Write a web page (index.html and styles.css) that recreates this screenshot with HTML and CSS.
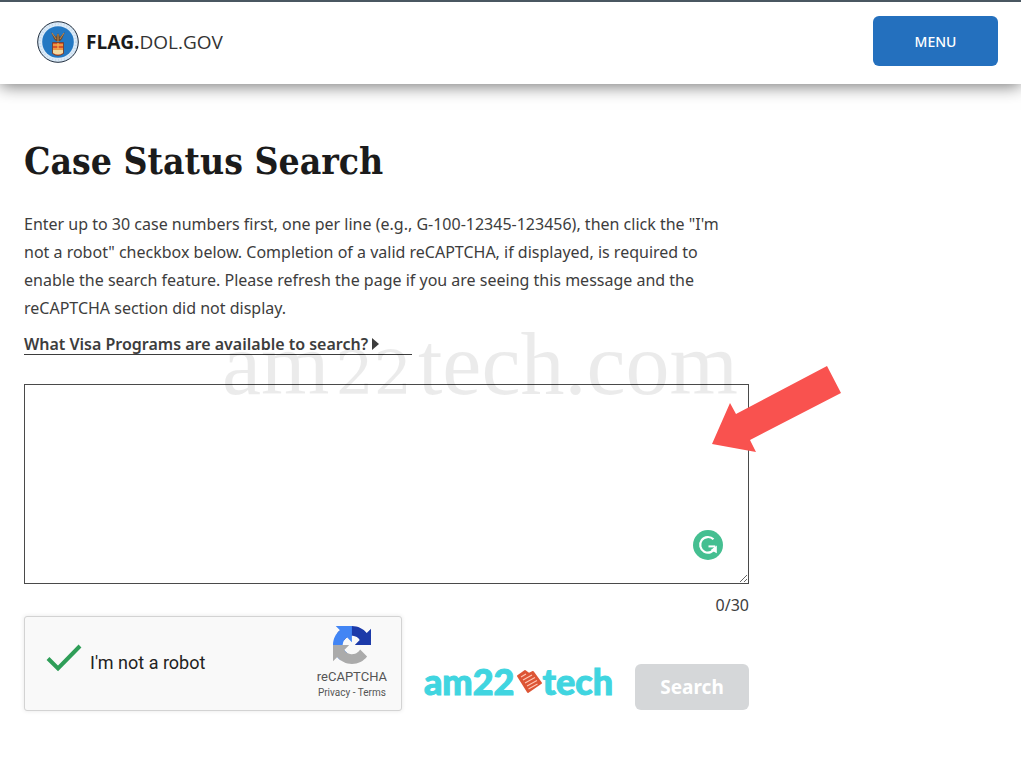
FILE: index.html
```
<!DOCTYPE html>
<html lang="en">
<head>
  <meta charset="UTF-8">
  <meta name="viewport" content="width=device-width, initial-scale=1.0">
  <title>Case Status Search</title>
  <link rel="stylesheet" href="styles.css">
</head>
<body>
  <header class="header">
    <a class="brand" href="#">
      <svg class="seal" viewBox="0 0 42 42" aria-hidden="true">
        <circle cx="21" cy="21" r="20.3" fill="#dcebf8" stroke="#1d2b3c" stroke-width="1"/>
        <circle cx="21" cy="21" r="18" fill="none" stroke="#c4d9ec" stroke-width="2" stroke-dasharray="1 2"/>
        <circle cx="21" cy="21" r="15.8" fill="#2378c3"/>
        <path d="M14 11l3 7 2 2h4l2-2 3-7-3 3-2 2-2-4-2 4-2-2z" fill="#6b4a2f"/>
        <path d="M15 12l4 6M27 12l-4 6M21 13v8" stroke="#c08a4c" stroke-width="1" fill="none"/>
        <path d="M15.500 21.500h11v11q-5.500 4-11 0z" fill="#d9532c" stroke="#6b3a1f" stroke-width=".7"/>
        <path d="M16 29h10v3q-5 3-10 0z" fill="#f0d9a0"/>
        <path d="M16 24h10M16 28h10M21 22v6" stroke="#f3b04c" stroke-width="1.300"/>
      </svg>
      <span><b>FLAG.</b>DOL.GOV</span>
    </a>
    <button class="menu-button" type="button">MENU</button>
  </header>

  <main class="content">
    <h1>Case Status Search</h1>
    <p class="intro">
      Enter up to 30 case numbers first, one per line (e.g., G-100-12345-123456), then click the "I'm<br>
      not a robot" checkbox below. Completion of a valid reCAPTCHA, if displayed, is required to<br>
      enable the search feature. Please refresh the page if you are seeing this message and the<br>
      reCAPTCHA section did not display.
    </p>
    <a class="programs" href="#">What Visa Programs are available to search? <span class="caret"></span></a>

    <form>
      <div class="case-box">
        <textarea class="case-input" aria-label="Case numbers"></textarea>
        <span class="watermark">am<span class="oldstyle">22</span>tech.com</span>
        <svg class="arrow" viewBox="0 0 130 87" aria-hidden="true">
          <path d="M0 78L18 37l6 11L115 0l14 27-91 47 6 12z" fill="#f9524f"/>
        </svg>
        <svg class="grammar" viewBox="0 0 30 30" aria-hidden="true">
          <circle cx="15" cy="15" r="15" fill="#45bf91"/>
          <path d="M20.500 9.300A7.800 7.800 0 1 0 22.300 17.500" fill="none" stroke="#fff" stroke-width="2.200"/>
          <path d="M15.500 16.400h6.800" stroke="#fff" stroke-width="2"/>
          <path d="M23.800 15.400v7.800l-6-3.200z" fill="#fff"/>
        </svg>
      </div>
      <div class="count">0/30</div>

      <div class="actions">
        <div class="captcha">
          <label class="robot">
            <input type="checkbox" checked>
            <svg class="tick" viewBox="0 0 36 28" aria-hidden="true">
              <path d="M2 14.500l10 10L34 2" fill="none" stroke="#2f9e58" stroke-width="4"/>
            </svg>
            I'm not a robot
          </label>
          <div class="captcha-info">
            <svg class="captcha-logo" viewBox="0 0 64 64" aria-hidden="true">
              <path fill="#1c3aa9" d="M64 31.955l-.033-1.370V4.687l-7.160 7.160C50.948 4.674 42.033.093 32.050.093c-10.400 0-19.622 4.960-25.458 12.640l11.736 11.860a15.550 15.550 0 0 1 4.754-5.334c2.050-1.600 4.952-2.906 8.968-2.906.485 0 .860.057 1.135.163 4.976.393 9.288 3.140 11.828 7.124l-8.307 8.307L64 31.953"/>
              <path fill="#4285f4" d="M31.862.094l-1.370.033H4.594l7.160 7.160C4.580 13.147 0 22.060 0 32.046c0 10.400 4.960 19.622 12.640 25.458L24.500 45.768a15.550 15.550 0 0 1-5.334-4.754c-1.600-2.050-2.906-4.952-2.906-8.968 0-.485.057-.860.163-1.135.393-4.976 3.140-9.288 7.124-11.828l8.307 8.307L31.860.095"/>
              <path fill="#ababab" d="M.001 32.045l.033 1.370v25.898l7.160-7.160c5.860 7.173 14.774 11.754 24.760 11.754 10.400 0 19.622-4.960 25.458-12.640l-11.736-11.860a15.550 15.550 0 0 1-4.754 5.334c-2.050 1.600-4.952 2.906-8.968 2.906-.485 0-.860-.057-1.135-.163-4.976-.393-9.288-3.140-11.828-7.124l8.307-8.307c-10.522.040-22.400.066-27.295-.005"/>
            </svg>
            <span class="captcha-name">reCAPTCHA</span>
            <span class="captcha-links"><a href="#">Privacy</a> - <a href="#">Terms</a></span>
          </div>
        </div>

        <div class="tech-logo">
          <span>am22</span>
          <svg viewBox="0 0 26 26" aria-hidden="true">
            <path d="M2 8L9 3l4 3 4-2 8 11L12 24z" fill="#dd5535" stroke="#dd5535" stroke-width="2" stroke-linejoin="round"/>
            <path d="M5 9l5-3M7 12l9-5M9 15l10-5.500M11 18l10-5.500M12.500 21l9-5" stroke="#ffc7b5" stroke-width="1.100"/>
          </svg>
          <span>tech</span>
        </div>

        <button class="search-button" type="submit" disabled>Search</button>
      </div>
    </form>
  </main>
</body>
</html>
```
FILE: styles.css
```
* {
  box-sizing: border-box;
}

body {
  margin: 0;
  background-color: #fff;
  color: #3d3d3d;
  font-family: "Noto Sans", "Open Sans", sans-serif;
  font-size: 16px;
}

a {
  color: inherit;
  text-decoration: none;
}

.header {
  display: flex;
  justify-content: space-between;
  align-items: center;
  height: 84px;
  padding: 0 23px 2px 37px;
  border-top: 2px solid #4a5761;
  box-shadow: 0 2px 16px rgba(0, 0, 0, 0.55);
}

.brand {
  display: flex;
  align-items: center;
  gap: 7px;
  color: #333;
  font-family: "Open Sans", sans-serif;
  font-size: 19px;
}

.brand b {
  color: #1b1b1b;
  font-weight: 700;
}

.seal {
  width: 42px;
  height: 42px;
}

.menu-button {
  width: 125px;
  height: 50px;
  margin-bottom: 2px;
  border: none;
  border-radius: 6px;
  background-color: #2470be;
  color: #fff;
  font-family: inherit;
  font-size: 14px;
  font-weight: 500;
  cursor: pointer;
}

.content {
  max-width: 773px;
  padding: 52px 24px;
}

h1 {
  margin: 0 0 24px;
  color: #1b1b1b;
  font-family: "DejaVu Serif Condensed", "DejaVu Serif", serif;
  font-size: 37px;
  line-height: 50px;
  white-space: nowrap;
}

.intro {
  margin: 0;
  line-height: 28px;
  white-space: nowrap;
}

.programs {
  display: flex;
  align-items: center;
  gap: 4px;
  width: 388px;
  height: 24px;
  margin: 9px 0 29px;
  padding-top: 2px;
  border-bottom: 1px solid #3d3d3d;
  font-weight: 600;
  white-space: nowrap;
}

.caret {
  border: 6px solid transparent;
  border-left: 7px solid #3d3d3d;
  border-right: none;
}

.case-box {
  position: relative;
}

.case-input {
  display: block;
  width: 100%;
  height: 200px;
  padding: 8px;
  border: 1px solid #4a4a4a;
  border-radius: 0;
  font: inherit;
  outline: none;
}

.watermark {
  position: absolute;
  top: -67px;
  left: 198px;
  color: rgba(0, 0, 0, 0.08);
  font-family: "Liberation Serif", serif;
  font-size: 88px;
  line-height: 96px;
  pointer-events: none;
}

.oldstyle {
  padding: 0 6px;
  font-family: "DejaVu Serif", serif;
  font-size: 60px;
}

.arrow {
  position: absolute;
  top: -18px;
  right: -93px;
  width: 130px;
  height: 87px;
}

.grammar {
  position: absolute;
  right: 26px;
  bottom: 24px;
  width: 30px;
  height: 30px;
}

.count {
  height: 32px;
  line-height: 42px;
  text-align: right;
}

.actions {
  display: flex;
  align-items: flex-end;
  justify-content: space-between;
}

.captcha {
  display: flex;
  justify-content: space-between;
  width: 378px;
  height: 95px;
  padding: 9px 14px 0 21px;
  border: 1px solid #d3d3d3;
  border-radius: 3px;
  background-color: #f9f9f9;
  box-shadow: 0 0 4px rgba(0, 0, 0, 0.1);
  font-family: Roboto, sans-serif;
}

.robot {
  display: flex;
  align-items: center;
  gap: 8px;
  height: 72px;
  color: #222;
  font-size: 18px;
}

/* the tick drawing stands in for the native box */
.robot input {
  position: absolute;
  opacity: 0;
}

.tick {
  width: 36px;
  height: 28px;
  margin-bottom: 8px;
}

.captcha-info {
  display: flex;
  flex-direction: column;
  align-items: center;
  color: #555;
}

.captcha-logo {
  width: 38px;
  height: 38px;
}

.captcha-name {
  margin-top: 4px;
  font-size: 13px;
  line-height: 18px;
}

.captcha-links {
  font-size: 10px;
  line-height: 14px;
}

.tech-logo {
  display: flex;
  align-items: center;
  color: #40d5e0;
  font-family: Lato, sans-serif;
  font-size: 36px;
  font-weight: 900;
  line-height: 60px;
  -webkit-text-stroke: 1px #40d5e0;
}

.tech-logo svg {
  width: 28px;
  height: 26px;
}

.search-button {
  width: 114px;
  height: 46px;
  margin-bottom: 1px;
  border: none;
  border-radius: 6px;
  background-color: #d5d7d9;
  color: #fff;
  font-family: inherit;
  font-size: 19px;
  font-weight: 700;
}
```
